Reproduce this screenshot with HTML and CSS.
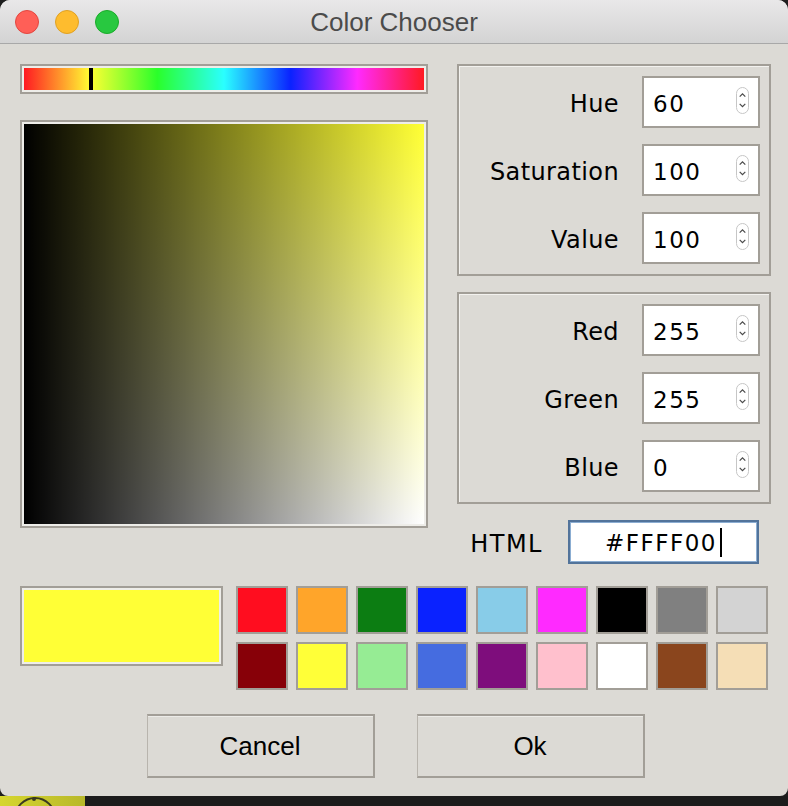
FILE: index.html
```html
<!DOCTYPE html>
<html>
<head>
<meta charset="utf-8">
<title>Color Chooser</title>
<link rel="stylesheet" href="styles.css">
</head>
<body>
<div class="window">
  <div class="titlebar">
    <div class="lights">
      <span class="light red"></span>
      <span class="light yellow"></span>
      <span class="light green"></span>
    </div>
    <div class="title">Color Chooser</div>
    <div></div>
  </div>
  <div class="content">
    <div class="top">
      <div class="left">
        <div class="huebar"><div class="huegrad"><span class="huemark"></span></div></div>
        <div class="svbox"><div class="svgrad"></div></div>
      </div>
      <div class="right">
        <div class="group">
          <div class="row"><span class="lbl">Hue</span><div class="spin"><span class="val">60</span><svg class="arrows" width="13" height="27" viewBox="0 0 13 27"><rect x="0.5" y="0.5" width="12" height="26" rx="6" fill="#fff" stroke="#c6c6c6"/><path d="M3.7 9.7 L6.5 6.8 L9.3 9.7" fill="none" stroke="#4a4a4a" stroke-width="1.2"/><path d="M3.7 16.8 L6.5 19.7 L9.3 16.8" fill="none" stroke="#4a4a4a" stroke-width="1.2"/></svg></div></div>
          <div class="row"><span class="lbl">Saturation</span><div class="spin"><span class="val">100</span><svg class="arrows" width="13" height="27" viewBox="0 0 13 27"><rect x="0.5" y="0.5" width="12" height="26" rx="6" fill="#fff" stroke="#c6c6c6"/><path d="M3.7 9.7 L6.5 6.8 L9.3 9.7" fill="none" stroke="#4a4a4a" stroke-width="1.2"/><path d="M3.7 16.8 L6.5 19.7 L9.3 16.8" fill="none" stroke="#4a4a4a" stroke-width="1.2"/></svg></div></div>
          <div class="row"><span class="lbl">Value</span><div class="spin"><span class="val">100</span><svg class="arrows" width="13" height="27" viewBox="0 0 13 27"><rect x="0.5" y="0.5" width="12" height="26" rx="6" fill="#fff" stroke="#c6c6c6"/><path d="M3.7 9.7 L6.5 6.8 L9.3 9.7" fill="none" stroke="#4a4a4a" stroke-width="1.2"/><path d="M3.7 16.8 L6.5 19.7 L9.3 16.8" fill="none" stroke="#4a4a4a" stroke-width="1.2"/></svg></div></div>
        </div>
        <div class="group">
          <div class="row"><span class="lbl">Red</span><div class="spin"><span class="val">255</span><svg class="arrows" width="13" height="27" viewBox="0 0 13 27"><rect x="0.5" y="0.5" width="12" height="26" rx="6" fill="#fff" stroke="#c6c6c6"/><path d="M3.7 9.7 L6.5 6.8 L9.3 9.7" fill="none" stroke="#4a4a4a" stroke-width="1.2"/><path d="M3.7 16.8 L6.5 19.7 L9.3 16.8" fill="none" stroke="#4a4a4a" stroke-width="1.2"/></svg></div></div>
          <div class="row"><span class="lbl">Green</span><div class="spin"><span class="val">255</span><svg class="arrows" width="13" height="27" viewBox="0 0 13 27"><rect x="0.5" y="0.5" width="12" height="26" rx="6" fill="#fff" stroke="#c6c6c6"/><path d="M3.7 9.7 L6.5 6.8 L9.3 9.7" fill="none" stroke="#4a4a4a" stroke-width="1.2"/><path d="M3.7 16.8 L6.5 19.7 L9.3 16.8" fill="none" stroke="#4a4a4a" stroke-width="1.2"/></svg></div></div>
          <div class="row"><span class="lbl">Blue</span><div class="spin"><span class="val">0</span><svg class="arrows" width="13" height="27" viewBox="0 0 13 27"><rect x="0.5" y="0.5" width="12" height="26" rx="6" fill="#fff" stroke="#c6c6c6"/><path d="M3.7 9.7 L6.5 6.8 L9.3 9.7" fill="none" stroke="#4a4a4a" stroke-width="1.2"/><path d="M3.7 16.8 L6.5 19.7 L9.3 16.8" fill="none" stroke="#4a4a4a" stroke-width="1.2"/></svg></div></div>
        </div>
        <div class="htmlrow">
          <span class="lbl html">HTML</span>
          <div class="hex"><span class="hexval">#FFFF00</span><span class="caret"></span></div>
        </div>
      </div>
    </div>
    <div class="bottomrow">
      <div class="preview"><div class="previewfill"></div></div>
      <div class="swatches">
        <div class="sw c-red"></div>
        <div class="sw c-orange"></div>
        <div class="sw c-green"></div>
        <div class="sw c-blue"></div>
        <div class="sw c-sky"></div>
        <div class="sw c-magenta"></div>
        <div class="sw c-black"></div>
        <div class="sw c-gray"></div>
        <div class="sw c-lightgray"></div>
        <div class="sw c-darkred"></div>
        <div class="sw c-yellow"></div>
        <div class="sw c-lightgreen"></div>
        <div class="sw c-royal"></div>
        <div class="sw c-purple"></div>
        <div class="sw c-pink"></div>
        <div class="sw c-white"></div>
        <div class="sw c-brown"></div>
        <div class="sw c-wheat"></div>
      </div>
    </div>
    <div class="buttons">
      <div class="btn">Cancel</div>
      <div class="btn">Ok</div>
    </div>
  </div>
</div>
<div class="desk">
  <div class="desk-yellow"><svg width="85" height="10" viewBox="0 0 85 10"><circle cx="35" cy="22" r="20" fill="none" stroke="#3a3a20" stroke-width="2"/><circle cx="34" cy="3" r="2" fill="#3a3a20"/></svg></div>
  <div class="desk-dark"></div>
</div>
</body>
</html>
```
FILE: styles.css
```css
html, body {
  margin: 0;
  padding: 0;
}
body {
  width: 788px;
  height: 806px;
  overflow: hidden;
  background: #1e1e1e;
  font-family: "DejaVu Sans", sans-serif;
  color: #000;
}
.window {
  width: 788px;
  height: 796px;
  background: #dcdad5;
  border-radius: 10px 10px 8px 8px;
  overflow: hidden;
}
.titlebar {
  height: 43px;
  border-bottom: 1px solid #a8a8a8;
  background: linear-gradient(#e9e8e9, #d3d3d3);
  display: grid;
  grid-template-columns: 1fr auto 1fr;
  align-items: center;
}
.lights {
  display: flex;
  gap: 16px;
  padding-left: 15px;
}
.light {
  width: 24px;
  height: 24px;
  border-radius: 50%;
  box-sizing: border-box;
}
.light.red { background: #ff5f57; border: 1px solid #e2463f; }
.light.yellow { background: #febc2e; border: 1px solid #dfa023; }
.light.green { background: #28c840; border: 1px solid #1aab29; }
.title {
  font-family: "Liberation Sans", Arial, sans-serif;
  font-size: 26px;
  color: #4b4b4b;
  padding-top: 1px;
}
.content {
  padding: 20px 17px 0 20px;
}
.top {
  display: flex;
  gap: 29px;
}
.left {
  width: 408px;
  display: flex;
  flex-direction: column;
  gap: 26px;
}
.huebar {
  height: 30px;
  box-sizing: border-box;
  border: 2px solid #a29e97;
  padding: 2px;
  background: #eeede9;
}
.huegrad {
  position: relative;
  height: 100%;
  background: linear-gradient(to right, #ff1a22 0%, #ffff33 16.67%, #2aff2a 33.33%, #2affff 50%, #0a22ff 66.67%, #ff2aff 83.33%, #ff1a22 100%);
}
.huemark {
  position: absolute;
  top: 0;
  bottom: 0;
  left: 16.67%;
  width: 4px;
  margin-left: -2px;
  background: #000;
}
.svbox {
  height: 408px;
  box-sizing: border-box;
  border: 2px solid #a29e97;
  padding: 2px;
  background: #eeede9;
}
.svgrad {
  height: 100%;
  background:
    linear-gradient(to right, #000, rgba(0,0,0,0)),
    linear-gradient(to bottom, #ffff33, #ffffff);
}
.right {
  width: 314px;
  display: flex;
  flex-direction: column;
  gap: 16px;
}
.group {
  height: 212px;
  box-sizing: border-box;
  border: 2px solid #a29e97;
  box-shadow: inset 1px 1px 0 #f3f2ef;
  padding: 10px 9px 10px 0;
  display: flex;
  flex-direction: column;
  gap: 16px;
}
.row {
  height: 52px;
  display: flex;
  align-items: center;
  justify-content: flex-end;
  gap: 23px;
}
.lbl {
  font-size: 24px;
  letter-spacing: 0.4px;
  padding-top: 3px;
}
.spin {
  width: 118px;
  height: 52px;
  box-sizing: border-box;
  border: 2px solid #a29e97;
  background: #fff;
  display: flex;
  align-items: center;
  padding: 0 9px 0 9px;
}
.val {
  flex: 1;
  font-size: 23px;
  letter-spacing: 1.5px;
  padding-top: 3px;
}
.arrows {
  display: block;
  margin-bottom: 4px;
}
.htmlrow {
  height: 44px;
  display: flex;
  align-items: center;
  justify-content: flex-end;
  gap: 25px;
  padding-right: 12px;
}
.lbl.html {
  letter-spacing: 1.5px;
}
.hex {
  width: 191px;
  height: 44px;
  box-sizing: border-box;
  border: 2px solid #52739a;
  box-shadow: inset 0 0 0 1px #8badd2;
  background: #fff;
  display: flex;
  align-items: center;
  justify-content: center;
}
.hexval {
  font-size: 23px;
  letter-spacing: 1.5px;
  padding-top: 2px;
}
.caret {
  width: 2px;
  height: 29px;
  background: #000;
  margin-left: 3px;
}
.bottomrow {
  display: flex;
  gap: 13px;
  margin-top: 22px;
}
.preview {
  width: 203px;
  height: 80px;
  box-sizing: border-box;
  border: 2px solid #a29e97;
  padding: 2px;
  background: #eeede9;
}
.previewfill {
  height: 100%;
  background: #ffff36;
}
.swatches {
  display: grid;
  grid-template-columns: repeat(9, 52px);
  grid-template-rows: 48px 48px;
  gap: 8px;
}
.sw {
  box-sizing: border-box;
  border: 2px solid #a29e97;
}
.c-red { background: #ff0d1f; }
.c-orange { background: #ffa52a; }
.c-green { background: #0c7d12; }
.c-blue { background: #0a22ff; }
.c-sky { background: #88cce8; }
.c-magenta { background: #ff2aff; }
.c-black { background: #000000; }
.c-gray { background: #808080; }
.c-lightgray { background: #d3d3d3; }
.c-darkred { background: #870008; }
.c-yellow { background: #ffff38; }
.c-lightgreen { background: #96ec94; }
.c-royal { background: #456ce0; }
.c-purple { background: #7e0d7c; }
.c-pink { background: #ffc0cd; }
.c-white { background: #ffffff; }
.c-brown { background: #8a451d; }
.c-wheat { background: #f5deb6; }
.buttons {
  display: flex;
  justify-content: center;
  gap: 42px;
  margin-top: 24px;
}
.btn {
  width: 228px;
  height: 64px;
  box-sizing: border-box;
  border-top: 2px solid #a29e97;
  border-bottom: 2px solid #a29e97;
  border-left: 1px solid #b8b4ad;
  border-right: 2px solid #a29e97;
  box-shadow: inset 0 1px 0 #ecebe8;
  background: #dcdad5;
  display: flex;
  align-items: center;
  justify-content: center;
  font-family: "Liberation Sans", Arial, sans-serif;
  font-size: 26px;
  color: #000;
}
.desk {
  height: 10px;
  display: flex;
}
.desk-yellow {
  width: 85px;
  height: 10px;
  background: linear-gradient(to right, #d6d62e, #b8b82a);
}
.desk-yellow svg {
  display: block;
}
.desk-dark {
  flex: 1;
  background: #1c1c1c;
}
```
